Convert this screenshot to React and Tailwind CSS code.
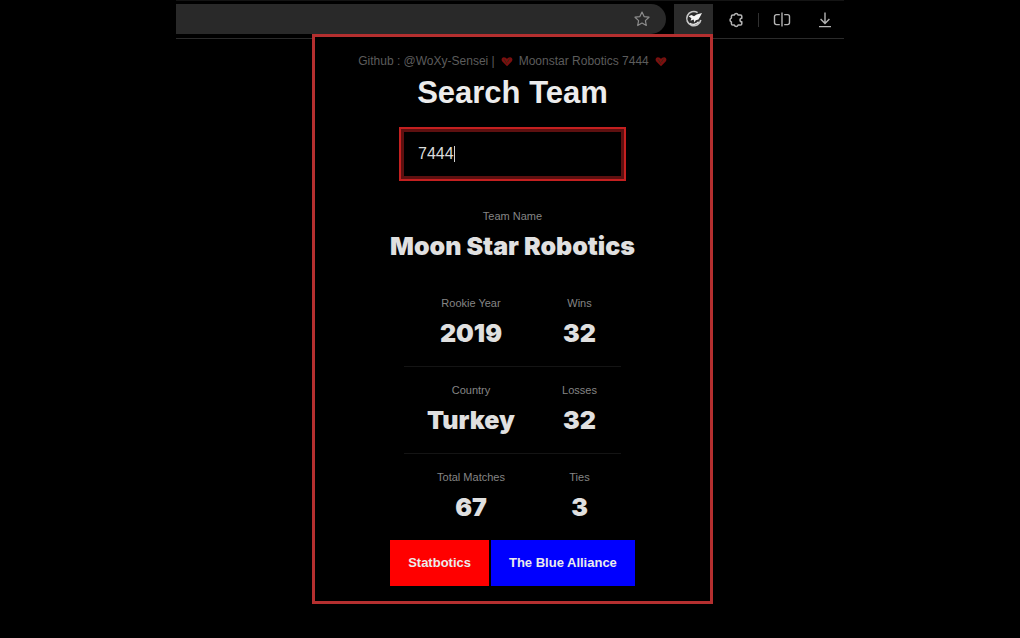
import React, { useState } from 'react';

const team = {
  name: 'Moon Star Robotics',
  rows: [
    [['Rookie Year', '2019'], ['Wins', '32']],
    [['Country', 'Turkey'], ['Losses', '32']],
    [['Total Matches', '67'], ['Ties', '3']],
  ],
};

const Heart = () => (
  <svg viewBox="0 0 12 11" className="w-3 h-[11px]" aria-hidden="true">
    <path d="M6 10.3 1.3 5.4C-.2 3.6.8 1.2 2.9 1.2c1.3 0 2.4.7 3.1 1.9.7-1.2 1.8-1.9 3.1-1.9 2.1 0 3.1 2.4 1.6 4.2Z" fill="#7c0f0f" />
    <path d="M3 3.2 6 8M8.6 2.6 6.4 6.2" stroke="#3c2410" strokeWidth="1" fill="none" />
  </svg>
);

const Stat = ({ label, value }) => (
  <div className="flex flex-col items-center">
    <dt className="text-[11px] leading-4 text-[#858585]">{label}</dt>
    <dd className="mt-[6px] font-['Inter','Liberation_Sans',sans-serif] text-[25px] leading-8 font-black whitespace-nowrap text-[#e0e0e0]">{value}</dd>
  </div>
);

const Toolbar = () => (
  <header className="flex h-[39px] items-start border-t border-b border-t-[#141414] border-b-[#2b2b2b] pt-[3px] text-[#b4b4b4]">
    <div className="flex h-[30px] flex-1 items-center justify-end rounded-r-full bg-[#292929] pr-4">
      <button type="button" aria-label="Bookmark" className="text-[#8c8c8c]">
        <svg viewBox="0 0 16 16" className="h-4 w-4" fill="none" stroke="currentColor" strokeWidth="1.2" strokeLinejoin="round">
          <path d="m8 1.1 2.1 4.5 4.9.6-3.6 3.4.9 4.9L8 12.1l-4.3 2.4.9-4.9L1 6.2l4.9-.6Z" />
        </svg>
      </button>
    </div>
    <button type="button" aria-label="Team search" className="ml-2 flex h-[34px] w-[39px] items-center justify-center bg-[#2b2b2b] pb-1">
      <svg viewBox="0 0 18 18" className="h-[18px] w-[18px]">
        <path d="M12.6 2.6A7.1 7.1 0 1 0 15.8 10" fill="none" stroke="#c8c8c8" strokeWidth="1.6" />
        <path d="M3.6 6.2 6.4 5 9 6.2 11.6 4.6 17 3 15.2 6.4 13.4 9.4 10.8 10.2 9.4 12.4 8.6 9.4 5.6 10.8 6.4 8.2Z" fill="#f5f5f5" />
        <path d="M5 13.4c2.6 1.6 6.4 1.2 8.6-1.6" fill="none" stroke="#e2e2e2" strokeWidth="1.4" />
      </svg>
    </button>
    <button type="button" aria-label="Extensions" className="mt-2 ml-[15px]">
      <svg viewBox="0 0 16 16" className="h-4 w-4" fill="none" stroke="currentColor" strokeWidth="1.5" strokeLinejoin="round">
        <path d="M4.8 2.9h1.5a2 2 0 0 1 3.8 0h2.4c.8 0 1.3.5 1.3 1.3v2a1.8 1.8 0 0 0 0 3.6v2c0 .8-.5 1.3-1.3 1.3h-2.4a2 2 0 0 1-3.8 0H4.8c-.8 0-1.4-.5-1.4-1.3V9.9a2 2 0 0 1 0-3.8V4.2c0-.8.6-1.3 1.4-1.3Z" />
      </svg>
    </button>
    <span className="mt-[9px] ml-[14px] h-[14px] w-px bg-[#303030]" />
    <button type="button" aria-label="Split screen" className="mt-2 ml-[14px]">
      <svg viewBox="0 0 18 16" className="h-4 w-[18px]" fill="none" stroke="currentColor" strokeWidth="1.4">
        <path d="M6.8 2.6H3.5a2 2 0 0 0-2 2v6a2 2 0 0 0 2 2h3.3M11.2 2.6h3.3a2 2 0 0 1 2 2v6a2 2 0 0 1-2 2h-3.3M9 .5v14" />
      </svg>
    </button>
    <button type="button" aria-label="Downloads" className="mt-2 mr-3 ml-[27px]">
      <svg viewBox="0 0 14 16" className="h-4 w-[14px]" fill="none" stroke="currentColor" strokeWidth="1.4">
        <path d="M7 .5v10.8M2.6 7 7 11.4 11.4 7M1 14.6h12" />
      </svg>
    </button>
  </header>
);

const App = () => {
  const [query, setQuery] = useState('7444');

  return (
    <div className="min-h-screen bg-black font-['Liberation_Sans',Arial,sans-serif]">
      <div className="mx-auto flex max-w-[668px] flex-col">
        <Toolbar />
        <main className="relative -mt-[5px] mr-[131px] flex w-[401px] flex-col items-center self-end border-3 border-[#b42f2f] bg-black pb-[15px]">
          <p className="mt-4 flex h-4 items-center text-xs whitespace-nowrap text-[#5c5c5c]">
            Github : @WoXy-Sensei |
            <span className="mx-[6px]"><Heart /></span>
            Moonstar Robotics 7444
            <span className="ml-[6px]"><Heart /></span>
          </p>
          <h1 className="mt-[6px] text-[31px] leading-9 font-bold text-[#ececec]">Search Team</h1>
          <div className="relative mt-4">
            <input
              type="text"
              aria-label="Search Team"
              autoFocus
              value={query}
              onChange={(e) => setQuery(e.target.value)}
              className="block h-[54px] w-[227px] border-2 border-[#c42020] bg-black px-[17px] text-base text-[#dcdcdc] caret-transparent inset-ring-3 inset-ring-[#5e1010] outline-none"
            />
            {/* caret sits right after the typed text */}
            <span aria-hidden="true" className="pointer-events-none absolute inset-y-0 left-[19px] flex items-center">
              <span className="h-4 border-l border-[#d0d0d0]" style={{ marginLeft: `${query.length * 0.556}em` }} />
            </span>
          </div>
          <dl className="mt-[27px] flex flex-col items-center">
            <Stat label="Team Name" value={team.name} />
            <div className="mt-[33px] w-[217px]">
              {team.rows.map((row, i) => (
                <div key={i} className={i ? 'grid grid-cols-[134px_1fr] border-t border-[#141414] pt-[15px]' : 'grid grid-cols-[134px_1fr]'}>
                  {row.map(([label, value]) => (
                    <div key={label} className="pb-[17px]">
                      <Stat label={label} value={value} />
                    </div>
                  ))}
                </div>
              ))}
            </div>
          </dl>
          <div className="flex gap-[2px] text-[13px] font-bold text-[#ececec]">
            <a href="#statbotics" className="bg-[#ff0000] px-[18px] py-[13px] leading-5">Statbotics</a>
            <a href="#tba" className="bg-[#0000ff] px-[18px] py-[13px] leading-5">The Blue Alliance</a>
          </div>
        </main>
      </div>
    </div>
  );
};

export default App;
